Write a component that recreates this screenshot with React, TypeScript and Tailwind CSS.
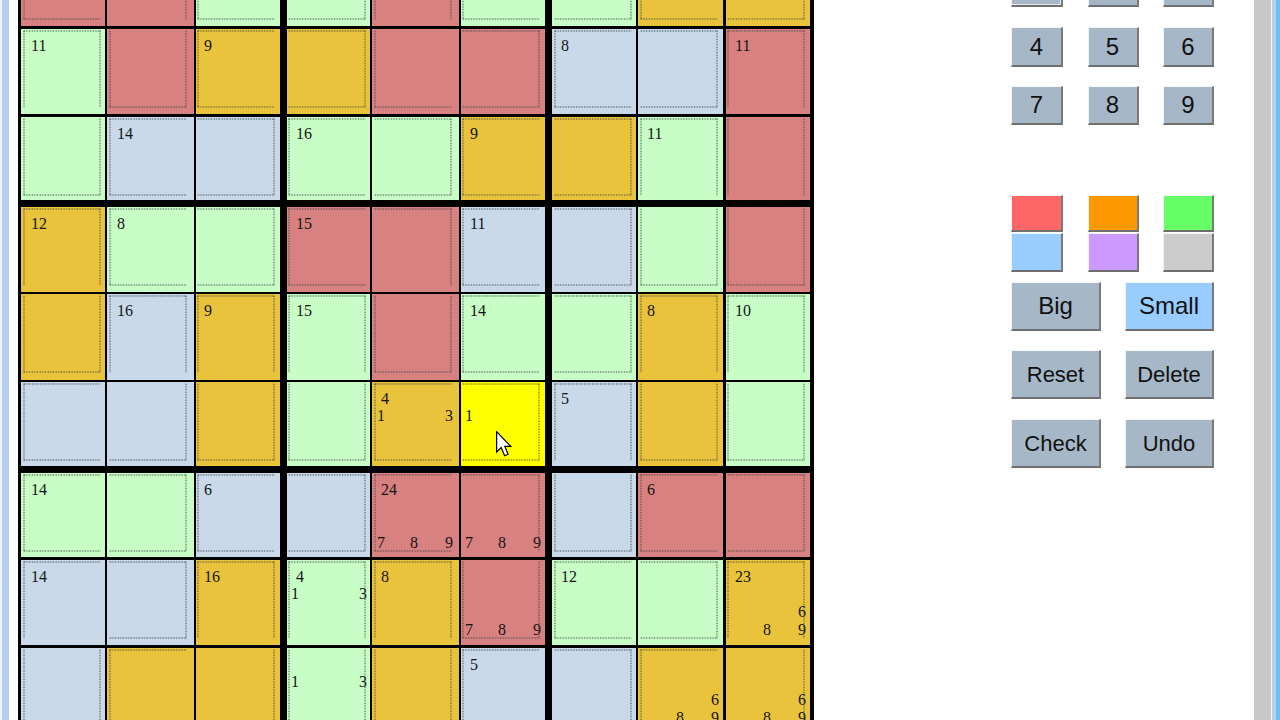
const bevel =
  'border-t border-l border-r-2 border-b-2 border-t-[#f6f6f6] border-l-[#f2f2f2] border-r-[#7a7a7a] border-b-[#6f6f6f]';

const fills: Record<string, string> = {
  r: 'bg-[#d88181]',
  g: 'bg-[#c8fec6]',
  o: 'bg-[#e9c33b]',
  b: 'bg-[#c9d9ea]',
  y: 'bg-[#ffff00]',
};

const colGap = ['mr-[2px]', 'mr-[2px]', 'mr-[7px]', 'mr-[2px]', 'mr-[2px]', 'mr-[7px]', 'mr-[2px]', 'mr-[3px]', ''];
const rowGap = ['mb-[3px]', 'mb-[3px]', 'mb-[7px]', 'mb-[2px]', 'mb-[2px]', 'mb-[7px]', 'mb-[3px]', 'mb-[3px]', ''];
const insetLeft = ['ml-[2px]', 'ml-[2px]', 'ml-[1px]', 'ml-[1px]', 'ml-[2px]', 'ml-[1px]', 'ml-[2px]', 'ml-[2px]', 'ml-[1px]'];
const labelPad = ['pl-[8px]', 'pl-[8px]', 'pl-[7px]', 'pl-[8px]', 'pl-[7px]', 'pl-[8px]', 'pl-[7px]', 'pl-[7px]', 'pl-[8px]'];

const dotsAcross =
  'absolute left-0 w-full h-[2px] bg-[radial-gradient(circle,rgba(60,70,70,.5)_35%,transparent_70%)] bg-[length:2.67px_2px]';
const dotsDown =
  'absolute top-0 h-full w-[2px] bg-[radial-gradient(circle,rgba(60,70,70,.5)_35%,transparent_70%)] bg-[length:2px_2.67px]';

// colour, dotted sides, cage sum, pencil marks
type Cell = [string, string, string?, string?];

const board: Cell[][] = [
  [['r', 'tlb'], ['r', 'tr'], ['g', 'tlb'], ['g', 'trb'], ['r', 'tlr'], ['g', 'tlb'], ['g', 'trb'], ['o', 'tlb'], ['o', 'trb']],
  [['g', 'tlr', '11'], ['r', 'lrb'], ['o', 'tlb', '9'], ['o', 'trb'], ['r', 'lb'], ['r', 'trb'], ['b', 'tlb', '8'], ['b', 'trb'], ['r', 'tlr', '11']],
  [['g', 'lrb'], ['b', 'tlb', '14'], ['b', 'trb'], ['g', 'tlb', '16'], ['g', 'trb'], ['o', 'tlb', '9'], ['o', 'trb'], ['g', 'tlr', '11'], ['r', 'lr']],
  [['o', 'tlr', '12'], ['g', 'tlb', '8'], ['g', 'trb'], ['r', 'tlb', '15'], ['r', 'tr'], ['b', 'tlb', '11'], ['b', 'trb'], ['g', 'lrb'], ['r', 'lrb']],
  [['o', 'lrb'], ['b', 'tlr', '16'], ['o', 'tlr', '9'], ['g', 'tlr', '15'], ['r', 'lrb'], ['g', 'tlb', '14'], ['g', 'trb'], ['o', 'tlr', '8'], ['g', 'tlr', '10']],
  [['b', 'tlb'], ['b', 'rb'], ['o', 'lrb'], ['g', 'lrb'], ['o', 'tlb', '4', '13'], ['y', 'trb', '', '1'], ['b', 'tlr', '5'], ['o', 'lrb'], ['g', 'lrb']],
  [['g', 'tlb', '14'], ['g', 'trb'], ['b', 'tlb', '6'], ['b', 'trb'], ['r', 'tlb', '24', '789'], ['r', 'tr', '', '789'], ['b', 'lrb'], ['r', 'tlb', '6'], ['r', 'trb']],
  [['b', 'tl', '14'], ['b', 'trb'], ['o', 'tlr', '16'], ['g', 'tlr', '4', '13'], ['o', 'tlr', '8'], ['r', 'lrb', '', '789'], ['g', 'tlb', '12'], ['g', 'trb'], ['o', 'tlr', '23', '689']],
  [['b', 'lr'], ['o', 'tl'], ['o', 'r'], ['g', 'lr', '', '13'], ['o', 'lr'], ['b', 'tl', '5'], ['b', 'tr'], ['o', 'tl', '', '689'], ['o', 'r', '', '689']],
];

function Btn({ label, className }: { label?: string; className: string }) {
  return <button className={`${bevel} ${className} text-[#111111] flex items-center justify-center`}>{label}</button>;
}

function SudokuCell({ cell, row, col }: { cell: Cell; row: number; col: number }) {
  const [fill, sides, sum, marks] = cell;
  return (
    <div className={`${fills[fill]} ${colGap[col]} ${rowGap[row]}`}>
      <div className={`relative mt-[1px] w-[78px] h-[78px] pt-[7px] ${insetLeft[col]}`}>
        {sides.includes('t') && <i className={`${dotsAcross} top-0`} />}
        {sides.includes('b') && <i className={`${dotsAcross} bottom-0`} />}
        {sides.includes('l') && <i className={`${dotsDown} left-0`} />}
        {sides.includes('r') && <i className={`${dotsDown} right-0`} />}
        <div className={`h-[17px] ${labelPad[col]}`}>{sum}</div>
        {marks && (
          <div className="ml-[3px] grid grid-cols-[33px_35px_8px] auto-rows-[18px]">
            {['1', '2', '3', '4', '5', '6', '7', '8', '9'].map((d) => (
              <span key={d}>{marks.includes(d) ? d : ''}</span>
            ))}
          </div>
        )}
      </div>
    </div>
  );
}

export default function App() {
  return (
    <div className="relative flex h-[720px] w-[1280px] overflow-hidden bg-white">
      <div className="w-[2px] bg-[#eef3fb]" />
      <div className="w-[7px] bg-[#b9cdee]" />

      <div className="flex flex-1 pl-[9px]">
        <div
          className="-mt-[59px] self-start pl-[3px] pr-[4px] bg-black grid grid-cols-[86px_89px_91px_85px_89px_91px_86px_88px_84px] grid-rows-[88px_88px_90px_87px_88px_91px_87px_88px_85px] text-[16px] leading-[18px] text-[#141414]"
          style={{ fontFamily: '"Liberation Serif", serif' }}
        >
          {board.map((cells, r) => cells.map((cell, c) => <SudokuCell key={`${r}-${c}`} cell={cell} row={r} col={c} />))}
        </div>

        <div className="ml-[197px] w-[203px] -mt-[33px] flex flex-col" style={{ fontFamily: '"Liberation Sans", sans-serif' }}>
          <div className="flex justify-between h-[40px] text-[24px]">
            <Btn label="1" className="w-[52px] bg-[#a6b8c8] shadow-[inset_-1px_-1px_0_#e8e8e8]" />
            <Btn label="2" className="w-[51px] bg-[#a6b8c8]" />
            <Btn label="3" className="w-[51px] bg-[#a6b8c8]" />
          </div>
          <div className="flex justify-between h-[40px] mt-[20px] text-[24px]">
            <Btn label="4" className="w-[52px] bg-[#a6b8c8]" />
            <Btn label="5" className="w-[51px] bg-[#a6b8c8]" />
            <Btn label="6" className="w-[51px] bg-[#a6b8c8]" />
          </div>
          <div className="flex justify-between h-[39px] mt-[19px] text-[24px]">
            <Btn label="7" className="w-[52px] bg-[#a6b8c8]" />
            <Btn label="8" className="w-[51px] bg-[#a6b8c8]" />
            <Btn label="9" className="w-[51px] bg-[#a6b8c8]" />
          </div>

          <div className="flex justify-between h-[37px] mt-[70px]">
            <Btn className="w-[52px] bg-[#ff6666]" />
            <Btn className="w-[51px] bg-[#ff9900]" />
            <Btn className="w-[51px] bg-[#66ff66]" />
          </div>
          <div className="flex justify-between h-[39px] mt-[1px]">
            <Btn className="w-[52px] bg-[#99ccff]" />
            <Btn className="w-[51px] bg-[#cc99ff]" />
            <Btn className="w-[51px] bg-[#cccccc]" />
          </div>

          <div className="flex justify-between h-[49px] mt-[10px] text-[24px]">
            <Btn label="Big" className="w-[90px] bg-[#a6b8c8]" />
            <Btn label="Small" className="w-[89px] bg-[#99ccff]" />
          </div>
          <div className="flex justify-between h-[49px] mt-[19px] text-[22px]">
            <Btn label="Reset" className="w-[90px] bg-[#a6b8c8]" />
            <Btn label="Delete" className="w-[89px] bg-[#a6b8c8]" />
          </div>
          <div className="flex justify-between h-[49px] mt-[20px] text-[22px]">
            <Btn label="Check" className="w-[90px] bg-[#a6b8c8]" />
            <Btn label="Undo" className="w-[89px] bg-[#a6b8c8]" />
          </div>
        </div>
      </div>

      <div className="w-[17px] bg-[#c8c8c8]" />
      <div className="w-[1px] bg-[#f4f7fb]" />
      <div className="w-[4px] bg-[#b9cdee]" />
      <div className="w-[4px] bg-[#6cc0f0]" />

      {/* mouse pointer */}
      <svg className="absolute left-[496px] top-[431px]" width="16" height="26" viewBox="0 0 13 21">
        <path d="M0.5 0.5 L0.5 17 L4.2 13.4 L7 20 L9.8 18.8 L7.2 12.5 L12 12.5 Z" fill="#fff" stroke="#000" strokeWidth="1" />
      </svg>
    </div>
  );
}
